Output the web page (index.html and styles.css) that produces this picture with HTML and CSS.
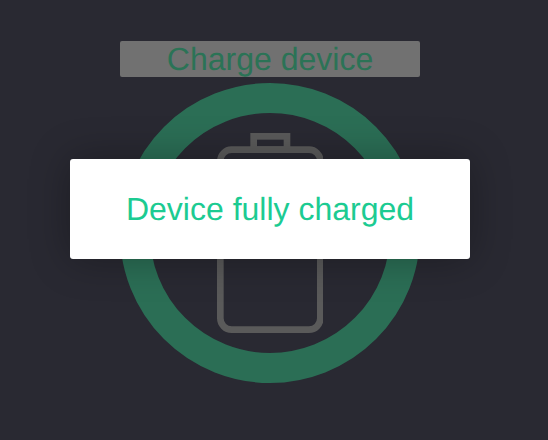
FILE: index.html
```html
<!DOCTYPE html>
<html lang="en">
<head>
<meta charset="utf-8">
<title>Charge device</title>
<link rel="stylesheet" href="styles.css">
</head>
<body>
<main class="page">
  <button class="charge-button" type="button">Charge device</button>
  <div class="ring">
    <svg class="battery" viewBox="0 0 16 30" fill="none" aria-hidden="true">
      <rect class="battery-stroke" x="5.5" y="0.5" width="5" height="2"/>
      <rect class="battery-stroke" x="0.5" y="2.5" width="15" height="27" rx="1.7"/>
    </svg>
  </div>
</main>
<div class="modal">Device fully charged</div>
</body>
</html>
```
FILE: styles.css
```css
html, body {
  margin: 0;
  height: 100%;
}
body {
  background: #292932;
  font-family: "Liberation Sans", Arial, sans-serif;
  text-rendering: geometricPrecision;
  overflow: hidden;
}
.page {
  width: 540px;
  padding-top: 41px;
  display: flex;
  flex-direction: column;
  align-items: center;
}
.charge-button {
  width: 300px;
  height: 36px;
  padding: 0;
  border: 0;
  border-radius: 2px;
  background: #717171;
  color: #2b7356;
  font: 32px/36px "Liberation Sans", Arial, sans-serif;
  text-rendering: geometricPrecision;
}
.ring {
  box-sizing: border-box;
  width: 300px;
  height: 300px;
  margin-top: 6px;
  border: 30px solid #2b6e55;
  border-radius: 50%;
  display: flex;
  justify-content: center;
  align-items: center;
}
.battery {
  width: 106.67px;
  height: 200px;
}
.battery-stroke {
  stroke: #5a5a5a;
  stroke-width: 1;
}
.modal {
  position: absolute;
  left: 70px;
  top: 159px;
  width: 400px;
  height: 100px;
  display: flex;
  align-items: center;
  justify-content: center;
  background: #fff;
  border-radius: 3px;
  box-shadow: 0 0 40px rgba(0, 0, 0, 0.3);
  color: #1ccb92;
  font-size: 32px;
}
```
